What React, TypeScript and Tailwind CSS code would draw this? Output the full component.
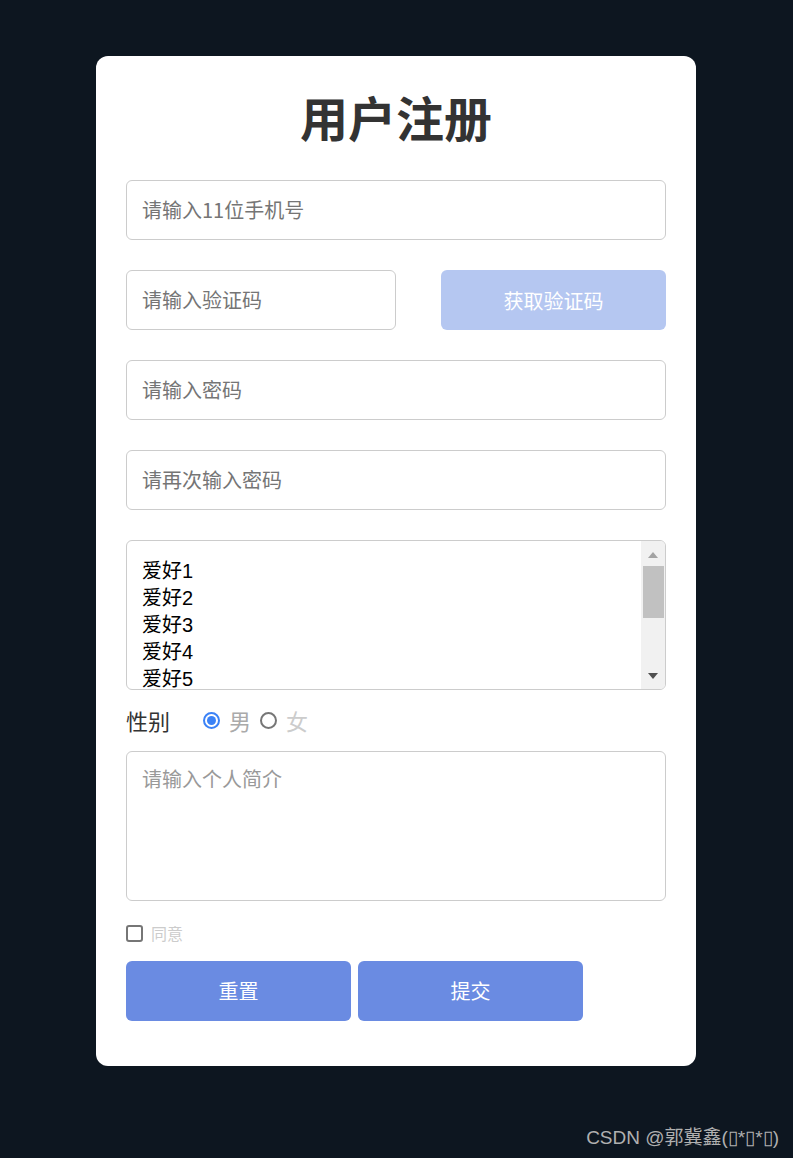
import React from "react";

const font = { fontFamily: '"Noto Sans CJK SC", "Liberation Sans", sans-serif' };

function Field({ ph, className = "" }: { ph: string; className?: string }) {
  return (
    <div
      className={`h-[60px] border border-[#cccccc] rounded-[6px] flex items-center pl-[15px] text-[20px] text-[#757575] ${className}`}
    >
      {ph}
    </div>
  );
}

export default function App() {
  const hobbies = ["爱好1", "爱好2", "爱好3", "爱好4", "爱好5"];
  return (
    <div className="relative min-h-[1158px] bg-[#0d1620] pt-[56px]" style={font}>
      <div className="ml-[96px] w-[600px] bg-white rounded-[12px] px-[30px] pt-[28px] pb-[45px]">
        <h1 className="text-center text-[48px] font-bold text-[#333333] leading-[64px]">用户注册</h1>
        <div className="mt-[32px] flex flex-col">
          <Field ph="请输入11位手机号" />
          <div className="mt-[30px] flex justify-between">
            <Field ph="请输入验证码" className="w-[270px]" />
            <div className="w-[225px] h-[60px] rounded-[6px] bg-[#b5c7f1] text-white text-[20px] flex items-center justify-center pt-[2px]">
              获取验证码
            </div>
          </div>
          <Field ph="请输入密码" className="mt-[30px]" />
          <Field ph="请再次输入密码" className="mt-[30px]" />
          <div className="mt-[30px] h-[150px] border border-[#cccccc] rounded-[6px] flex overflow-hidden">
            <div className="flex-1 pl-[15px] pt-[17px] text-[20px] leading-[27px] text-black" style={{ fontFamily: '"Liberation Sans", "Noto Sans CJK SC", sans-serif' }}>
              {hobbies.map((h) => (
                <div key={h}>{h}</div>
              ))}
            </div>
            <div className="w-[24px] bg-[#f1f1f1] flex flex-col items-center py-[8px] relative">
              <svg width="10" height="6" viewBox="0 0 10 6" className="mt-[3px]">
                <polygon points="5,0 10,6 0,6" fill="#a3a3a3" />
              </svg>
              <div className="mt-[8px] w-[21px] h-[52px] bg-[#c1c1c1]" />
              <div className="flex-1" />
              <svg width="10" height="6" viewBox="0 0 10 6" className="mb-[2px]">
                <polygon points="0,0 10,0 5,6" fill="#505050" />
              </svg>
            </div>
          </div>
          <div className="h-[61px] flex items-center text-[22px]">
            <span className="text-[#333333]">性别</span>
            <span className="ml-[33px] w-[17px] h-[17px] rounded-full border-2 border-[#3b82f6] flex items-center justify-center">
              <span className="w-[9px] h-[9px] rounded-full bg-[#3b82f6]" />
            </span>
            <span className="ml-[9px] text-[#aaaaaa]">男</span>
            <span className="ml-[9px] w-[17px] h-[17px] rounded-full border-2 border-[#767676]" />
            <span className="ml-[9px] text-[#cccccc]">女</span>
          </div>
          <div className="h-[150px] border border-[#cccccc] rounded-[6px] pl-[15px] pt-[12px] text-[20px] leading-[30px] text-[#999999]">
            请输入个人简介
          </div>
          <div className="mt-[20px] flex items-center">
            <span className="w-[17px] h-[17px] rounded-[3px] border-2 border-[#767676]" />
            <span className="ml-[8px] text-[16px] text-[#cccccc]">同意</span>
          </div>
          <div className="mt-[16px] flex gap-[7px]">
            <div className="w-[225px] h-[60px] rounded-[6px] bg-[#6a8be2] text-white text-[20px] flex items-center justify-center">重置</div>
            <div className="w-[225px] h-[60px] rounded-[6px] bg-[#6a8be2] text-white text-[20px] flex items-center justify-center">提交</div>
          </div>
        </div>
      </div>
      <div className="absolute right-[14px] bottom-[6px] text-[19px] text-[#b0b0b0]" style={{ fontFamily: '"Liberation Sans", "Noto Sans CJK SC", sans-serif' }}>
        CSDN @郭冀鑫(▯*▯*▯)
      </div>
    </div>
  );
}
